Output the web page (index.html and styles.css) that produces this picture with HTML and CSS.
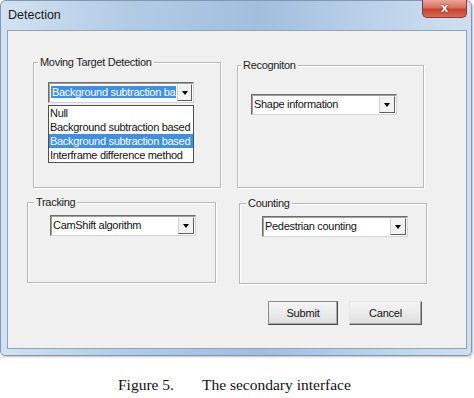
FILE: index.html
```html
<!DOCTYPE html>
<html>
<head>
<meta charset="utf-8">
<link rel="stylesheet" href="styles.css">
</head>
<body>
<div class="window">
  <div class="titlebar">
    <span class="title">Detection</span>
    <span class="close">x</span>
  </div>
  <div class="client">
    <div class="row row1">
      <div class="group g1">
        <span class="legend">Moving Target Detection</span>
        <div class="combo">
          <div class="field"><span class="sel">Background subtraction ba</span></div>
          <div class="arrow"><span class="tri"></span></div>
        </div>
        <ul class="list">
          <li>Null</li>
          <li>Background subtraction based</li>
          <li class="hl">Background subtraction based</li>
          <li>Interframe difference method</li>
        </ul>
      </div>
      <div class="group g2">
        <span class="legend">Recogniton</span>
        <div class="combo">
          <div class="field">Shape information</div>
          <div class="arrow"><span class="tri"></span></div>
        </div>
      </div>
    </div>
    <div class="row row2">
      <div class="group g3">
        <span class="legend">Tracking</span>
        <div class="combo">
          <div class="field">CamShift algorithm</div>
          <div class="arrow"><span class="tri"></span></div>
        </div>
      </div>
      <div class="group g4">
        <span class="legend">Counting</span>
        <div class="combo">
          <div class="field">Pedestrian counting</div>
          <div class="arrow"><span class="tri"></span></div>
        </div>
      </div>
    </div>
    <div class="row buttons">
      <button class="btn submit">Submit</button>
      <button class="btn cancel">Cancel</button>
    </div>
  </div>
</div>
<p class="caption"><span class="fig">Figure 5.</span>The secondary interface</p>
</body>
</html>
```

FILE: styles.css
```css
* { box-sizing: border-box; }
html, body { margin: 0; padding: 0; background: #ffffff; }
body { width: 474px; height: 398px; overflow: hidden; font-family: "Liberation Sans", Arial, sans-serif; font-size: 11px; letter-spacing: -0.3px; color: #000; }

.window {
  width: 472px;
  height: 356px;
  background: linear-gradient(90deg, #d3e2f1 0%, #b4cce6 25%, #a2bedc 55%, #bcd2ea 80%, #d0e0f0 100%);
  border: 1px solid #7f98b4;
  border-radius: 6px 6px 5px 5px;
  display: flex;
  flex-direction: column;
  box-shadow: 1px 1px 2px rgba(0,0,0,0.25);
}
.titlebar {
  height: 29px;
  display: flex;
  align-items: flex-start;
  justify-content: space-between;
}
.title {
  font-size: 12.5px;
  letter-spacing: 0;
  color: #1a1a1a;
  margin: 7px 0 0 7px;
}
.close {
  width: 45px;
  height: 18px;
  margin-top: -1px;
  margin-right: 4px;
  background: linear-gradient(180deg, #eaa597 0%, #d8715e 45%, #c5432d 55%, #d96b55 100%);
  border: 1px solid #8e3a2e;
  border-top: none;
  border-radius: 0 0 5px 5px;
  color: #fff;
  font-weight: bold;
  font-size: 13px;
  letter-spacing: 0;
  text-align: center;
  line-height: 15px;
  text-shadow: 0 0 2px #6a1a10;
}
.client {
  width: 460px;
  height: 319px;
  margin-left: 6px;
  background: #f0f0f0;
  border: 1px solid #8ea4bd;
}
.row { display: flex; align-items: flex-start; }
.row1 { padding-top: 31px; }
.group {
  border: 1px solid #b8b8b8;
  box-shadow: inset 1px 1px 0 #ffffff, 1px 1px 0 #ffffff;
  display: flex;
  flex-direction: column;
  align-items: flex-start;
}
.legend {
  display: block;
  height: 14px;
  line-height: 14px;
  margin-top: -8px;
  padding: 0 2px;
  background: #f0f0f0;
  color: #222;
  white-space: nowrap;
}
.g1 { width: 188px; height: 126px; margin-left: 25px; }
.g1 .legend { margin-left: 4px; }
.g1 .combo { margin: 13px 0 0 14px; }
.g2 { width: 187px; height: 123px; margin-left: 16px; margin-top: 3px; }
.g2 .legend { margin-left: 3px; }
.g2 .combo { margin: 22px 0 0 13px; }
.row2 { margin-top: 14px; }
.g3 { width: 189px; height: 81px; margin-left: 19px; }
.g3 .legend { margin-left: 6px; }
.g3 .combo { margin: 6px 0 0 22px; }
.g4 { width: 188px; height: 81px; margin-left: 23px; margin-top: 1px; }
.g4 .legend { margin-left: 6px; }
.g4 .combo { margin: 6px 0 0 22px; }

.combo {
  width: 146px;
  height: 21px;
  background: #ffffff;
  border: 1px solid;
  border-color: #6e6e6e #d4d4d4 #d4d4d4 #6e6e6e;
  box-shadow: inset 1px 1px 0 #a0a0a0;
  display: flex;
  align-items: center;
  padding: 0 1px 0 2px;
}
.field {
  flex: 1;
  white-space: nowrap;
  line-height: 15px;
  height: 15px;
  color: #111;
}
.sel {
  background: #3f8fe6;
  color: #ffffff;
  padding: 0 1px;
}
.arrow {
  width: 16px;
  height: 17px;
  margin-left: 1px;
  background: #f2f2f2;
  border: 1px solid;
  border-color: #f8f8f8 #5f5f5f #5f5f5f #d0d0d0;
  display: flex;
  align-items: center;
  justify-content: center;
}
.tri {
  width: 0; height: 0;
  border-left: 3.5px solid transparent;
  border-right: 3.5px solid transparent;
  border-top: 4px solid #000;
}
.list {
  list-style: none;
  margin: 2px 0 0 14px;
  padding: 0;
  width: 146px;
  height: 58px;
  background: #fff;
  border: 1px solid #4f4f4f;
}
.list li {
  height: 14px;
  line-height: 14px;
  padding-left: 1px;
  white-space: nowrap;
  color: #111;
}
.list li.hl { background: #3f8fe6; color: #fff; }

.buttons { margin-top: 17px; }
.btn {
  height: 24px;
  font-family: "Liberation Sans", Arial, sans-serif;
  font-size: 11px;
  letter-spacing: -0.2px;
  color: #111;
  background: linear-gradient(180deg, #f4f4f4 0%, #ebebeb 50%, #dedede 100%);
  border: 1px solid;
  border-color: #e6e6e6 #5a5a5a #5a5a5a #e6e6e6;
  box-shadow: inset -1px -1px 0 #a8a8a8;
  padding: 0;
}
.submit { width: 70px; margin-left: 260px; border-color: #8a8a8a #4a4a4a #4a4a4a #8a8a8a; }
.cancel { width: 73px; margin-left: 11px; }

.caption {
  margin: 20px 0 0 118px;
  font-family: "Liberation Serif", "Times New Roman", serif;
  font-size: 15.5px;
  letter-spacing: 0;
  color: #111;
  white-space: nowrap;
}
.fig { margin-right: 28px; }
```
